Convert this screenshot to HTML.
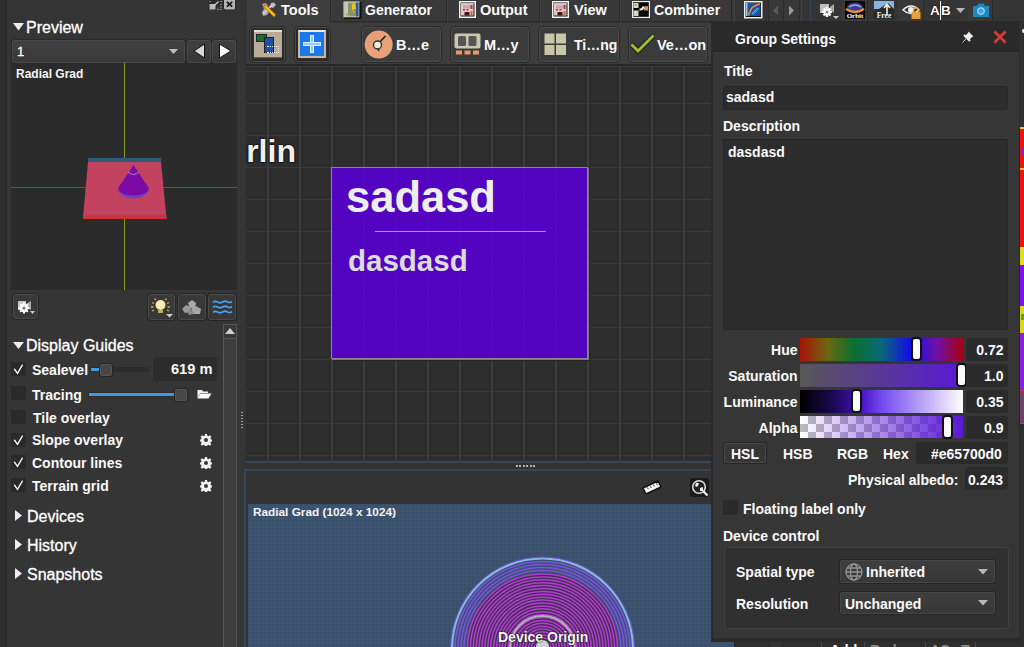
<!DOCTYPE html>
<html><head><meta charset="utf-8">
<style>
*{margin:0;padding:0;box-sizing:border-box}
html,body{width:1024px;height:647px;overflow:hidden;background:#2b2b2b;font-family:"Liberation Sans",sans-serif;color:#fafafa}
.a{position:absolute}
.b{font-weight:bold}
.t{position:absolute;white-space:nowrap;line-height:1}
.btn{border-radius:3px;background:#383838;border:1px solid #4a4a4a;box-shadow:0 0 0 1px #262626}
.cb{left:11px;width:15px;height:14px;background:#2a2a2a}
.cb span{position:absolute;left:2px;top:0px;font-size:13px;line-height:15px;color:#f0f0f0}
.thumb{width:14px;height:14px;border-radius:3px;background:#474747;border:1px solid #262626;box-shadow:inset 0 0 0 1px #555}
.tb{border-radius:4px;background:#333;border:1px solid #2a2a2a;box-shadow:inset 0 0 0 1px #4a4a4a,inset 0 0 0 3px #2a2a2a}
.tb2{border-radius:4px;background:#3b3b3b;border:1px solid #2a2a2a;box-shadow:inset 0 0 0 1px #4a4a4a}
.lbl{right:221.5px;font-size:14px;text-align:right}
.vthumb{width:11px;height:24px;background:#fafafa;border:2px solid #111;border-radius:4px}
.vbox{left:255px;width:42px;height:23px;background:#2b2b2b;border-radius:3px}
.val{right:15.5px;font-size:14px;text-align:right}
.dd{border-radius:3px;background:linear-gradient(#3e3e3e,#373737);border:1px solid #262626;box-shadow:inset 0 0 0 1px #474747}
</style></head><body>
<svg width="0" height="0" style="position:absolute"><defs>
<path id="gearp" d="M5 0H7L7.3 1.7A4.5 4.5 0 0 1 8.6 2.3L10 1.3L11.4 2.7L10.4 4.1A4.5 4.5 0 0 1 11 5.4L12 5.6V7.4L10.9 7.6A4.5 4.5 0 0 1 10.4 8.9L11.4 10.3L10 11.7L8.6 10.7A4.5 4.5 0 0 1 7.3 11.3L7 12H5L4.7 11.3A4.5 4.5 0 0 1 3.4 10.7L2 11.7L0.6 10.3L1.6 8.9A4.5 4.5 0 0 1 1.1 7.6L0 7.4V5.6L1 5.4A4.5 4.5 0 0 1 1.6 4.1L0.6 2.7L2 1.3L3.4 2.3A4.5 4.5 0 0 1 4.7 1.7Z M6 4A2 2 0 1 0 6 8A2 2 0 1 0 6 4Z" fill="#f0f0f0" fill-rule="evenodd"/>
</defs></svg>

<!-- LEFT PANEL -->
<div class="a" id="left" style="left:0;top:0;width:244px;height:647px;background:#353535">
  <div class="a" style="left:0;top:0;width:6px;height:647px;background:#2e2e2e"></div>
  <div class="a" style="left:6px;top:0;width:1px;height:647px;background:#282828"></div>
  <!-- top icons -->
  <svg class="a" style="left:207px;top:0" width="16" height="12" viewBox="0 0 16 12">
    <rect x="1.5" y="-1" width="13" height="11" fill="#2a2a2a"/>
    <rect x="2.5" y="4" width="6" height="5.5" fill="#b8b8b8"/>
    <path d="M6 7 L11.5 1.5" stroke="#c8c8c8" stroke-width="1.2"/>
    <path d="M8.5 9.5 L11.5 5 L14 9.5Z" fill="#3a3a3a"/>
    <g fill="#e0e0e0"><rect x="13.5" y="1" width="1" height="1"/><rect x="13.5" y="4" width="1" height="1"/><rect x="13.5" y="6.5" width="1" height="1"/><rect x="13.5" y="9" width="1" height="1"/><rect x="10.5" y="9" width="1" height="1"/><rect x="2.5" y="1" width="1" height="1"/></g>
  </svg>
  <svg class="a" style="left:222px;top:0" width="15" height="12" viewBox="0 0 15 12">
    <rect x="1.5" y="-3" width="12" height="13" rx="2" fill="#b4b4b4" stroke="#262626" stroke-width="1"/>
    <path d="M4.8 1.8 L10.2 6.6 M10.2 1.8 L4.8 6.6" stroke="#151515" stroke-width="1.8"/>
  </svg>
  <!-- Preview header -->
  <svg class="a" style="left:13px;top:23px" width="11" height="8" viewBox="0 0 11 8"><path d="M0 0 H11 L5.5 7.5Z" fill="#eee"/></svg>
  <div class="t" style="left:26px;top:20px;font-size:16px;color:#fff;-webkit-text-stroke:0.3px #fff">Preview</div>
  <!-- dropdown -->
  <div class="a" style="left:12px;top:40px;width:173px;height:23px;border-radius:3px;background:linear-gradient(#404040,#393939);border:1px solid #4a4a4a;box-shadow:0 0 0 1px #2a2a2a"></div>
  <div class="t" style="left:17px;top:45px;font-size:13px;color:#fff;-webkit-text-stroke:0.3px #fff">1</div>
  <svg class="a" style="left:169px;top:49px" width="9" height="5" viewBox="0 0 9 5"><path d="M0 0 H9 L4.5 5Z" fill="#bdbdbd"/></svg>
  <div class="a" style="left:187px;top:40px;width:24px;height:23px;border-radius:3px;background:linear-gradient(#3f3f3f,#383838);border:1px solid #4a4a4a;box-shadow:0 0 0 1px #2a2a2a"></div>
  <div class="a" style="left:212px;top:40px;width:24px;height:23px;border-radius:3px;background:linear-gradient(#3f3f3f,#383838);border:1px solid #4a4a4a;box-shadow:0 0 0 1px #2a2a2a"></div>
  <svg class="a" style="left:193px;top:43px" width="13" height="16" viewBox="0 0 13 16"><path d="M11.5 1 V15 L1 8Z" fill="#d8d8d8" stroke="#111" stroke-width="1"/></svg>
  <svg class="a" style="left:218px;top:43px" width="14" height="16" viewBox="0 0 14 16"><path d="M1.5 1 V15 L13 8Z" fill="#fafafa" stroke="#111" stroke-width="1"/></svg>
  <!-- viewport -->
  <div class="a" style="left:11px;top:63px;width:226px;height:227px;background:#2b2b2b;overflow:hidden">
    <div class="a" style="left:113px;top:0;width:1px;height:227px;background:#80a024"></div>
    <div class="a" style="left:0;top:124px;width:226px;height:1px;background:#a8344a"></div>
    <svg class="a" style="left:0;top:0" width="226" height="227" viewBox="11 63 226 227">
      <rect x="88" y="158" width="73" height="4" fill="#2c5a78"/>
      <path d="M88 162 H161 L166.5 218.5 H83 Z" fill="#c24260"/>
      <rect x="83" y="214.5" width="83.5" height="3" fill="#b83a50"/>
      <rect x="83" y="217.5" width="83.5" height="1.5" fill="#e02828"/>
      <ellipse cx="133.5" cy="189" rx="15" ry="9.5" fill="#6a40c8"/>
      <path d="M133.5 165 L118.5 188 Q133.5 196 148.5 188 Z" fill="#7c0aa4"/>
      <ellipse cx="133.5" cy="188.5" rx="15" ry="7" fill="#7c0aa4"/>
      <path d="M128 172 Q133.5 177 139 172" fill="none" stroke="#c0a0c0" stroke-width="0.8"/>
    </svg>
    <div class="t b" style="left:5px;top:5px;font-size:12px;color:#f6f6f6">Radial Grad</div>
  </div>
  <!-- viewport toolbar -->
  <div class="a btn" style="left:13px;top:294px;width:25px;height:25px"></div>
  <div class="a btn" style="left:148px;top:294px;width:27px;height:26px"></div>
  <div class="a btn" style="left:178px;top:294px;width:28px;height:26px"></div>
  <div class="a btn" style="left:208px;top:294px;width:28px;height:26px"></div>
  <!-- camera gear icon -->
  <svg class="a" style="left:16px;top:298px" width="20" height="18" viewBox="0 0 20 18">
    <rect x="2" y="3" width="8" height="9" fill="#c8c8c8"/>
    <path d="M10 6 L15 3 V12 L10 9Z" fill="#aaa"/>
    <circle cx="8" cy="10" r="4.2" fill="#fff"/>
    <g stroke="#fff" stroke-width="2"><path d="M8 4.5V15.5M2.5 10H13.5M4.1 6.1L11.9 13.9M11.9 6.1L4.1 13.9"/></g>
    <circle cx="8" cy="10" r="1.6" fill="#777"/>
    <path d="M14 13 H19 L16.5 16Z" fill="#ccc"/>
  </svg>
  <!-- bulb -->
  <svg class="a" style="left:151px;top:297px" width="24" height="21" viewBox="0 0 24 21">
    <circle cx="9.5" cy="8" r="5" fill="#f5eeb0"/>
    <rect x="7" y="13" width="5" height="3" fill="#c8b050"/>
    <g stroke="#d8b040" stroke-width="1.3"><path d="M1 5.5L3 6.5M0 10H2.5M1 14L3 13M18 5.5L16 6.5M19 10H16.5M18 14L16 13M3.5 1.5L5 3M15.5 1.5L14 3"/></g>
    <path d="M15 17 H22 L18.5 20.5Z" fill="#ccc"/>
  </svg>
  <!-- rocks -->
  <svg class="a" style="left:182px;top:300px" width="20" height="16" viewBox="0 0 20 16">
    <path d="M6 3 L10 0 L14 3 L13 8 L8 8Z" fill="#aaa"/>
    <path d="M0 9 L4 5 L9 7 L8 12 L3 13Z" fill="#999"/>
    <path d="M9 9 L14 6 L19 9 L18 14 L11 14Z" fill="#a5a5a5"/>
    <path d="M5 12 L9 10 L12 14 L7 15Z" fill="#8a8a8a"/>
  </svg>
  <!-- water -->
  <svg class="a" style="left:212px;top:300px" width="21" height="14" viewBox="0 0 21 14">
    <g fill="none" stroke="#3a2a20" stroke-width="2.8" opacity=".7">
      <path d="M1 3 Q3 1 5.5 2.5 T10.5 2.5 T15.5 2.5 T20 2"/>
      <path d="M1 8 Q3 6 5.5 7.5 T10.5 7.5 T15.5 7.5 T20 7"/>
      <path d="M1 13 Q3 11 5.5 12.5 T10.5 12.5 T15.5 12.5 T20 12"/>
    </g>
    <g fill="none" stroke="#42a2f4" stroke-width="1.8">
      <path d="M1 2.5 Q3 0.5 5.5 2 T10.5 2 T15.5 2 T20 1.5"/>
      <path d="M1 7.5 Q3 5.5 5.5 7 T10.5 7 T15.5 7 T20 6.5"/>
      <path d="M1 12.5 Q3 10.5 5.5 12 T10.5 12 T15.5 12 T20 11.5"/>
    </g>
  </svg>
  <!-- scrollbar -->
  <div class="a" style="left:223px;top:324px;width:14px;height:323px;background:#3e3e3e;border-left:1px solid #5a5a5a;border-right:1px solid #505050"></div>
  <div class="a" style="left:223px;top:324px;width:14px;height:15px;background:#383838;border:1px solid #585858;border-radius:2px"></div>
  <svg class="a" style="left:225px;top:328px" width="10" height="6" viewBox="0 0 10 6"><path d="M0 6 H10 L5 0Z" fill="#d0d0d0"/></svg>
  <!-- splitter dots -->
  <div class="a" style="left:241px;top:412px;width:2px;height:18px;background:repeating-linear-gradient(#a0a0a0 0 1px,transparent 1px 3px)"></div>
  <!-- Display Guides -->
  <svg class="a" style="left:13px;top:342px" width="11" height="7" viewBox="0 0 11 7"><path d="M0 0 H11 L5.5 7Z" fill="#eee"/></svg>
  <div class="t" style="left:26px;top:338px;font-size:16px;color:#fff;-webkit-text-stroke:0.3px #fff">Display Guides</div>
  <div class="a cb" style="top:362px"><svg width="15" height="15" viewBox="0 0 15 15" style="position:absolute;left:0;top:0"><path d="M3.2 6.8 L6.5 11.4 L11.6 2.6" fill="none" stroke="#000" stroke-opacity=".5" stroke-width="2.6"/><path d="M3.2 6.8 L6.5 11.4 L11.6 2.6" fill="none" stroke="#f4f4f4" stroke-width="1.5"/></svg></div>
  <div class="t b" style="left:32px;top:363px;font-size:14px">Sealevel</div>
  <div class="a" style="left:90px;top:367px;width:59px;height:5px;background:#2c2c2c;border-radius:2px"></div>
  <div class="a" style="left:91px;top:368px;width:9px;height:3px;background:#3d9ae8"></div>
  <div class="a thumb" style="left:99px;top:363px"></div>
  <div class="a" style="left:153px;top:357px;width:64px;height:24px;background:#2c2c2c;border-radius:3px"></div>
  <div class="t b" style="left:171px;top:362px;font-size:14.6px">619 m</div>
  <div class="a cb" style="top:386px"></div>
  <div class="t b" style="left:32px;top:388px;font-size:14px">Tracing</div>
  <div class="a" style="left:88px;top:392px;width:101px;height:5px;background:#2c2c2c;border-radius:2px"></div>
  <div class="a" style="left:89px;top:393px;width:87px;height:3px;background:#3d9ae8"></div>
  <div class="a thumb" style="left:174px;top:388px"></div>
  <svg class="a" style="left:197px;top:389px" width="15" height="10" viewBox="0 0 15 10"><path d="M0.5 1 H5 L6 2.5 H11 V4 H3.5 L0.5 9.5Z" fill="#f0f0f0"/><path d="M3.5 4.5 H14.5 L11.5 9.5 H0.5Z" fill="#f8f8f8"/></svg>
  <div class="a cb" style="top:410px"></div>
  <div class="t b" style="left:33px;top:411px;font-size:14px">Tile overlay</div>
  <div class="a cb" style="top:433px"><svg width="15" height="15" viewBox="0 0 15 15" style="position:absolute;left:0;top:0"><path d="M3.2 6.8 L6.5 11.4 L11.6 2.6" fill="none" stroke="#000" stroke-opacity=".5" stroke-width="2.6"/><path d="M3.2 6.8 L6.5 11.4 L11.6 2.6" fill="none" stroke="#f4f4f4" stroke-width="1.5"/></svg></div>
  <div class="t b" style="left:32px;top:433px;font-size:14px">Slope overlay</div>
  <div class="a cb" style="top:455px"><svg width="15" height="15" viewBox="0 0 15 15" style="position:absolute;left:0;top:0"><path d="M3.2 6.8 L6.5 11.4 L11.6 2.6" fill="none" stroke="#000" stroke-opacity=".5" stroke-width="2.6"/><path d="M3.2 6.8 L6.5 11.4 L11.6 2.6" fill="none" stroke="#f4f4f4" stroke-width="1.5"/></svg></div>
  <div class="t b" style="left:32px;top:456px;font-size:14px">Contour lines</div>
  <div class="a cb" style="top:478px"><svg width="15" height="15" viewBox="0 0 15 15" style="position:absolute;left:0;top:0"><path d="M3.2 6.8 L6.5 11.4 L11.6 2.6" fill="none" stroke="#000" stroke-opacity=".5" stroke-width="2.6"/><path d="M3.2 6.8 L6.5 11.4 L11.6 2.6" fill="none" stroke="#f4f4f4" stroke-width="1.5"/></svg></div>
  <div class="t b" style="left:32px;top:479px;font-size:14px">Terrain grid</div>
  <svg class="a gear" style="left:200px;top:434px" width="12" height="12" viewBox="0 0 12 12"><use href="#gearp"/></svg>
  <svg class="a gear" style="left:200px;top:457px" width="12" height="12" viewBox="0 0 12 12"><use href="#gearp"/></svg>
  <svg class="a gear" style="left:200px;top:480px" width="12" height="12" viewBox="0 0 12 12"><use href="#gearp"/></svg>
  <!-- collapsed sections -->
  <svg class="a" style="left:15px;top:510px" width="7" height="11" viewBox="0 0 7 11"><path d="M0 0 V11 L7 5.5Z" fill="#eee"/></svg>
  <div class="t" style="left:27px;top:509px;font-size:16px;color:#fff;-webkit-text-stroke:0.3px #fff">Devices</div>
  <svg class="a" style="left:15px;top:539px" width="7" height="11" viewBox="0 0 7 11"><path d="M0 0 V11 L7 5.5Z" fill="#eee"/></svg>
  <div class="t" style="left:27px;top:538px;font-size:16px;color:#fff;-webkit-text-stroke:0.3px #fff">History</div>
  <svg class="a" style="left:15px;top:568px" width="7" height="11" viewBox="0 0 7 11"><path d="M0 0 V11 L7 5.5Z" fill="#eee"/></svg>
  <div class="t" style="left:27px;top:567px;font-size:16px;color:#fff;-webkit-text-stroke:0.3px #fff">Snapshots</div>
</div>

<!-- CENTER -->
<div class="a" id="center" style="left:244px;top:0;width:468px;height:647px;background:#333333">
  <!-- tab row -->
  <div class="a" style="left:2px;top:0;width:489px;height:22px;background:#393939"></div>
  <div class="a" style="left:2px;top:21px;width:489px;height:1px;background:#2c2c2c"></div>
  <div class="a" style="left:487px;top:0;width:1px;height:21px;background:#2a2a2a"></div>
  <div class="a" style="left:490px;top:0;width:1px;height:21px;background:#414141"></div>
  <div class="a" style="left:3px;top:0;width:83px;height:23px;background:#3d3d3d"></div>
  <div class="a" style="left:86px;top:0;width:1px;height:22px;background:#2a2a2a"></div>
  <div class="a" style="left:87px;top:0;width:1px;height:22px;background:#414141"></div>
  <div class="a" style="left:202px;top:0;width:1px;height:22px;background:#2a2a2a"></div>
  <div class="a" style="left:203px;top:0;width:1px;height:22px;background:#414141"></div>
  <div class="a" style="left:295px;top:0;width:1px;height:22px;background:#2a2a2a"></div>
  <div class="a" style="left:296px;top:0;width:1px;height:22px;background:#414141"></div>
  <div class="a" style="left:375px;top:0;width:1px;height:22px;background:#2a2a2a"></div>
  <div class="a" style="left:376px;top:0;width:1px;height:22px;background:#414141"></div>
  <!-- tools icon -->
  <svg class="a" style="left:16px;top:1px" width="18" height="17" viewBox="0 0 18 17">
    <path d="M2 3 L6 2 L8 5 L6 8 L9 11 L7 14 L3 15 L2 11 L4 8 Z" fill="#a8a8b0"/>
    <path d="M11 2 L14 1.5 L16 4 L13 7 L10 6 Z" fill="#b8b8c0"/>
    <path d="M3 13 L13 3" stroke="#c8c8d0" stroke-width="2"/>
    <path d="M4 4 L15 15" stroke="#e07010" stroke-width="3.2"/>
    <path d="M5 5 L14.5 14.5" stroke="#f0e010" stroke-width="1.6"/>
  </svg>
  <div class="t b" style="left:37px;top:3px;font-size:14.5px">Tools</div>
  <!-- generator icon -->
  <svg class="a" style="left:99px;top:1px" width="19" height="18" viewBox="0 0 19 18">
    <rect x="0.5" y="0.5" width="16" height="16" fill="#e8e8e8"/>
    <rect x="16.5" y="1" width="2" height="17" fill="#111"/><rect x="1" y="16.5" width="17" height="1.5" fill="#111"/>
    <rect x="1.5" y="1.5" width="14" height="14" fill="#8a9a40"/>
    <rect x="1.5" y="1.5" width="4" height="14" fill="#c8c8b8"/>
    <path d="M5 2 L9 5 L8 9 L11 13 L7 15.5 L5 12Z" fill="#909070"/>
    <path d="M9 3 L12 2 L13 8 L11 12 L9 8Z" fill="#d8d020"/>
    <rect x="13" y="1.5" width="2.5" height="14" fill="#2a58b0"/>
    <circle cx="11.5" cy="9" r="1" fill="#d04020"/>
    <circle cx="4" cy="13.5" r="1" fill="#60b030"/>
  </svg>
  <div class="t b" style="left:121px;top:3px;font-size:14px">Generator</div>
  <!-- output icon -->
  <svg class="a" style="left:215px;top:1px" width="18" height="18" viewBox="0 0 18 18">
    <rect x="0" y="0" width="17" height="17" fill="#f4f4f4"/>
    <rect x="1.5" y="1.5" width="14" height="14" fill="#1a1010"/>
    <rect x="2" y="2" width="12.5" height="12.5" fill="#e8c8c0"/>
    <rect x="2" y="2" width="12.5" height="1.5" fill="#c0c0c8"/>
    <rect x="4" y="4.5" width="7" height="3" fill="#c8a898"/>
    <rect x="4" y="8" width="2" height="1.5" fill="#903070"/><rect x="7.5" y="8" width="2" height="1.5" fill="#903070"/><rect x="11.5" y="4" width="2" height="4" fill="#8a4060"/>
    <rect x="5.5" y="11" width="5" height="3.5" fill="#401818"/>
    <rect x="11.5" y="10" width="2" height="4" fill="#c07040"/>
  </svg>
  <div class="t b" style="left:236px;top:3px;font-size:14.5px">Output</div>
  <!-- view icon -->
  <svg class="a" style="left:308px;top:1px" width="18" height="18" viewBox="0 0 18 18">
    <rect x="0" y="0" width="17" height="17" fill="#f4f4f4"/>
    <rect x="1.5" y="1.5" width="14" height="14" fill="#1a1010"/>
    <rect x="2" y="2" width="12.5" height="12.5" fill="#e8c8c0"/>
    <rect x="2" y="2" width="12.5" height="1.5" fill="#c0c0c8"/>
    <rect x="4" y="4.5" width="7" height="3" fill="#c8a898"/>
    <rect x="4" y="8" width="2" height="1.5" fill="#903070"/><rect x="7.5" y="8" width="2" height="1.5" fill="#903070"/><rect x="11.5" y="4" width="2" height="4" fill="#8a4060"/>
    <rect x="5.5" y="11" width="5" height="3.5" fill="#401818"/>
    <rect x="11.5" y="10" width="2" height="4" fill="#c07040"/>
  </svg>
  <div class="t b" style="left:330px;top:3px;font-size:14.5px">View</div>
  <!-- combiner icon -->
  <svg class="a" style="left:388px;top:1px" width="19" height="18" viewBox="0 0 19 18">
    <rect x="0" y="0" width="18" height="17" fill="#f0f0f0"/>
    <rect x="1.2" y="1.2" width="15.6" height="14.6" fill="#050505"/>
    <rect x="1.5" y="2" width="5" height="13" fill="#d8d8c0"/>
    <path d="M1.5 8.5 H8 Q11 8.5 11 6.5 H16" fill="none" stroke="#f0f0f0" stroke-width="2"/>
    <rect x="1.5" y="7" width="6" height="2.5" fill="#050505"/>
    <rect x="12" y="6" width="4" height="3.5" fill="#c89870"/>
    <rect x="3" y="3" width="1.5" height="2" fill="#60c030"/>
  </svg>
  <div class="t b" style="left:410px;top:3px;font-size:14.2px">Combiner</div>

  <!-- toolbar row -->
  <div class="a" style="left:3px;top:23px;width:465px;height:41px;background:#3d3d3d"></div>
  <div class="a tb" style="left:5px;top:26px;width:37px;height:37px"></div>
  <div class="a tb" style="left:50px;top:26px;width:37px;height:37px"></div>
  <!-- icon1 -->
  <div class="a" style="left:10px;top:30px;width:28px;height:28px;background:#b8ac98;border-top:2px solid #e8e0d0;border-bottom:1px solid #6a5a40"></div>
  <div class="a" style="left:12px;top:34px;width:11px;height:8px;background:#1a6a38;border:1px solid #222"></div>
  <div class="a" style="left:20px;top:37px;width:10px;height:16px;background:#2050a0;border:1px solid #222"></div>
  <div class="a" style="left:23px;top:46px;width:12px;height:7px;border:1px dotted #eee;border-left:0"></div>
  <!-- icon2 -->
  <div class="a" style="left:54px;top:30px;width:28px;height:28px;background:#1a78e8;border:2px solid #c8b8a0;border-top-color:#f0e8d8"></div>
  <div class="a" style="left:66px;top:35px;width:4px;height:18px;background:#9ac8f0;border:1px solid #d8ecfc"></div>
  <div class="a" style="left:59px;top:42px;width:18px;height:4px;background:#9ac8f0;border:1px solid #d8ecfc"></div>
  <!-- labeled buttons -->
  <div class="a tb2" style="left:117px;top:26px;width:81px;height:37px"></div>
  <div class="a tb2" style="left:206px;top:26px;width:80px;height:37px"></div>
  <div class="a tb2" style="left:294px;top:26px;width:82px;height:37px"></div>
  <div class="a tb2" style="left:384px;top:26px;width:80px;height:37px"></div>
  <svg class="a" style="left:120px;top:30px" width="30" height="30" viewBox="0 0 30 30">
    <circle cx="14.7" cy="14.6" r="14" fill="#e8a078"/>
    <path d="M14 14 L21.5 6" stroke="#222" stroke-width="1.6"/>
    <path d="M13 16 L15 21" stroke="#222" stroke-width="1.4"/>
    <circle cx="13.5" cy="15" r="4" fill="#f0f0d8" stroke="#333" stroke-width="1.4"/>
  </svg>
  <div class="t b" style="left:152px;top:38px;font-size:14.5px">B…e</div>
  <svg class="a" style="left:210px;top:33px" width="27" height="23" viewBox="0 0 27 23">
    <rect x="0.5" y="0.5" width="26" height="15" rx="2" fill="#c8c8b0"/>
    <rect x="4" y="3" width="8" height="10" rx="1.5" fill="#555"/>
    <rect x="14.5" y="3" width="8" height="10" rx="1.5" fill="#555"/>
    <rect x="2" y="17.5" width="6" height="4" fill="#e89868"/>
    <rect x="10.5" y="17.5" width="6" height="4" fill="#e89868"/>
    <rect x="19" y="17.5" width="6" height="4" fill="#e89868"/>
  </svg>
  <div class="t b" style="left:240px;top:38px;font-size:14.5px">M…y</div>
  <svg class="a" style="left:300px;top:33px" width="23" height="23" viewBox="0 0 23 23">
    <rect x="0.5" y="0.5" width="10" height="10" fill="#c8c8a8"/>
    <rect x="12" y="0.5" width="10" height="10" fill="#c8c8a8"/>
    <rect x="0.5" y="12" width="10" height="10" fill="#c8c8a8"/>
    <rect x="12" y="12" width="10" height="10" fill="#c8c8a8"/>
  </svg>
  <div class="t b" style="left:330px;top:38px;font-size:14px">Ti…ng</div>
  <svg class="a" style="left:385px;top:33px" width="27" height="22" viewBox="0 0 27 22">
    <path d="M2.5 11.5 L9 18 L24.5 2.5" fill="none" stroke="#1a1a1a" stroke-width="5"/>
    <path d="M2.5 11.5 L9 18 L24.5 2.5" fill="none" stroke="#9cc034" stroke-width="3"/>
  </svg>
  <div class="t b" style="left:413px;top:38px;font-size:14.5px">Ve…on</div>

  <!-- canvas -->
  <div class="a" style="left:2px;top:64px;width:466px;height:398px;background-color:#2d2d2d;
     background-image:linear-gradient(90deg,transparent 21px,#3c3c3c 21px,#3c3c3c 23px,transparent 23px),linear-gradient(180deg,transparent 7px,#3a3a3a 7px,#3a3a3a 8px,transparent 8px);
     background-size:32px 32px;background-position:0 0;overflow:hidden">
    <div class="a" style="left:0;top:0;width:466px;height:2px;background:#262626"></div>
    <div class="a" style="left:0;top:2px;width:466px;height:1px;background:#3a3a3a"></div>
    <div class="t b" style="left:-39px;top:71px;font-size:32px;color:#f0f0f0;text-shadow:0 0 2px #000,0 0 2px #000">Perlin</div>
    <div class="a" style="left:85px;top:103px;width:257px;height:192px;background:rgba(87,0,208,0.9);border:1px solid #8a8a8a;box-shadow:1px 1px 0 #7a7a7a,2px 2px 0 #262626"></div>
    <div class="t b" style="left:100px;top:112px;font-size:43.5px;color:#eeeeee">sadasd</div>
    <div class="a" style="left:129px;top:166.5px;width:171px;height:1px;background:#a09cc0"></div>
    <div class="t b" style="left:102px;top:182px;font-size:29.5px;color:#dcdcdc">dasdasd</div>
  </div>
  <div class="a" style="left:2px;top:461px;width:466px;height:1.5px;background:#34485a"></div>
  <!-- splitter -->
  <div class="a" style="left:272px;top:465px;width:19px;height:2px;background:repeating-linear-gradient(90deg,#b0b0b0 0 2px,transparent 2px 3.4px)"></div>
  <!-- bottom panel -->
  <div class="a" style="left:0px;top:469px;width:468px;height:2px;background:#34485a"></div>
  <div class="a" style="left:0px;top:470px;width:2px;height:177px;background:#34485a"></div>
  <svg class="a" style="left:397px;top:478px" width="22" height="16" viewBox="0 0 22 16">
    <path d="M2 10 L17 3 L20 9 L5 16 Z" fill="#f5f5f5" stroke="#111" stroke-width="1.4" stroke-linejoin="round"/>
    <path d="M6.5 9.5 L7.3 11.2 M9.5 8.1 L10.3 9.8 M12.5 6.7 L13.3 8.4 M15.5 5.3 L16.3 7" stroke="#333" stroke-width="1"/>
  </svg>
  <div class="a" style="left:446px;top:478px;width:19px;height:19px;background:#1a1a1a;border-radius:3px"></div>
  <svg class="a" style="left:447px;top:479px" width="18" height="18" viewBox="0 0 18 18">
    <circle cx="8" cy="8" r="6.3" fill="#222" stroke="#ddd" stroke-width="1.6"/>
    <path d="M5 4 Q7 3 8 5 L6 8 L4 7Z M9 9 L12 8 L12 12 L9 12Z" fill="#eee"/>
    <path d="M12.5 12.5 L16.5 16.5" stroke="#eee" stroke-width="2.4"/>
  </svg>
  <!-- viewport -->
  <div class="a" style="left:4px;top:504px;width:464px;height:143px;background-color:#3d5572;overflow:hidden;
     background-image:linear-gradient(90deg,rgba(0,0,0,.035) 50%,transparent 50%),linear-gradient(rgba(0,0,0,.035) 50%,transparent 50%);background-size:4px 4px">
    <svg class="a" style="left:0;top:0" width="464" height="143" viewBox="0 0 464 143">
<circle cx="294.5" cy="145" r="76" fill="#4a2a58"/>
<circle cx="294.5" cy="145" r="75" fill="none" stroke="#b040d0" stroke-width="1.5"/>
<circle cx="294.5" cy="145" r="72.1" fill="none" stroke="#b040d0" stroke-width="1.5"/>
<circle cx="294.5" cy="145" r="69.19999999999999" fill="none" stroke="#b040d0" stroke-width="1.5"/>
<circle cx="294.5" cy="145" r="66.29999999999998" fill="none" stroke="#b040d0" stroke-width="1.5"/>
<circle cx="294.5" cy="145" r="63.399999999999984" fill="none" stroke="#b040d0" stroke-width="1.5"/>
<circle cx="294.5" cy="145" r="60.499999999999986" fill="none" stroke="#b040d0" stroke-width="1.5"/>
<circle cx="294.5" cy="145" r="57.59999999999999" fill="none" stroke="#b040d0" stroke-width="1.5"/>
<circle cx="294.5" cy="145" r="54.69999999999999" fill="none" stroke="#b040d0" stroke-width="1.5"/>
<circle cx="294.5" cy="145" r="51.79999999999999" fill="none" stroke="#b040d0" stroke-width="1.5"/>
<circle cx="294.5" cy="145" r="48.89999999999999" fill="none" stroke="#b040d0" stroke-width="1.5"/>
<circle cx="294.5" cy="145" r="45.99999999999999" fill="none" stroke="#b040d0" stroke-width="1.5"/>
<circle cx="294.5" cy="145" r="43.099999999999994" fill="none" stroke="#b040d0" stroke-width="1.5"/>
<circle cx="294.5" cy="145" r="40.199999999999996" fill="none" stroke="#b040d0" stroke-width="1.5"/>
<circle cx="294.5" cy="145" r="37.3" fill="none" stroke="#b040d0" stroke-width="1.5"/>
<circle cx="294.5" cy="145" r="34.4" fill="none" stroke="#b040d0" stroke-width="1.5"/>
<circle cx="294.5" cy="145" r="31.5" fill="none" stroke="#b040d0" stroke-width="1.5"/>
<circle cx="294.5" cy="145" r="28.6" fill="none" stroke="#b040d0" stroke-width="1.5"/>
<circle cx="294.5" cy="145" r="25.700000000000003" fill="none" stroke="#b040d0" stroke-width="1.5"/>
<circle cx="294.5" cy="145" r="22.800000000000004" fill="none" stroke="#b040d0" stroke-width="1.5"/>
<circle cx="294.5" cy="145" r="19.900000000000006" fill="none" stroke="#b040d0" stroke-width="1.5"/>
<circle cx="294.5" cy="145" r="17.000000000000007" fill="none" stroke="#b040d0" stroke-width="1.5"/>
<circle cx="294.5" cy="145" r="14.100000000000007" fill="none" stroke="#b040d0" stroke-width="1.5"/>
<circle cx="294.5" cy="145" r="11.200000000000006" fill="none" stroke="#b040d0" stroke-width="1.5"/>
<circle cx="294.5" cy="145" r="8.300000000000006" fill="none" stroke="#b040d0" stroke-width="1.5"/>
<circle cx="294.5" cy="145" r="5.400000000000006" fill="none" stroke="#b040d0" stroke-width="1.5"/>
<circle cx="294.5" cy="145" r="78.5" fill="none" stroke="#7a52e0" stroke-width="1.6"/>
<circle cx="294.5" cy="145" r="81.5" fill="none" stroke="#7a52e0" stroke-width="1.6"/>
<circle cx="294.5" cy="145" r="84.5" fill="none" stroke="#7a52e0" stroke-width="1.6"/>
<circle cx="294.5" cy="145" r="87.5" fill="none" stroke="#7a52e0" stroke-width="1.6"/>
<circle cx="294.5" cy="145" r="90.5" fill="none" stroke="#88b8e0" stroke-width="2.2"/>
<circle cx="294.5" cy="145" r="92" fill="none" stroke="#7a52e0" stroke-width="0.8"/>
</svg>
    <div class="a" style="left:261px;top:111px;width:67px;height:67px;border-radius:50%;border:2px solid #b8b0b8"></div>
    <div class="a" style="left:287px;top:135px;width:15px;height:15px;border-radius:50%;background:#d0d0d0;border:1.5px solid #222"></div>
    <div class="t b" style="left:5px;top:3px;font-size:11.8px;color:#f4f4f4">Radial Grad (1024 x 1024)</div>
    <div class="t b" style="left:250px;top:126px;font-size:14px;color:#fafafa;text-shadow:0 0 1.5px #000,0 0 1px #000">Device Origin</div>
  </div>
</div>

<!-- TOP RIGHT BAR -->
<div class="a" id="topright" style="left:735px;top:0;width:289px;height:22px;background:#353535;overflow:hidden">
  <div class="a" style="left:0;top:21px;width:312px;height:1px;background:#2a2a2a"></div>
  <div class="a" style="left:-3px;top:0;width:1px;height:21px;background:#2a2a2a"></div>
  <div class="a" style="left:-2px;top:0;width:1px;height:21px;background:#414141"></div>
  <!-- image icon -->
  <svg class="a" style="left:9px;top:1px" width="19" height="18" viewBox="0 0 19 18">
    <rect x="0" y="0" width="18.5" height="17.5" fill="#f0f0f0"/>
    <rect x="1.5" y="1.5" width="15.5" height="14.5" fill="#101010"/>
    <rect x="2" y="2" width="14.5" height="13" fill="#2050a0"/>
    <rect x="2" y="2" width="1.5" height="13" fill="#a0c8e0"/>
    <path d="M4.5 14.5 Q7 7 9 6 Q12 4 16 3" fill="none" stroke="#e89030" stroke-width="1.6"/>
    <path d="M8 13 L14 7" stroke="#40b8f0" stroke-width="1.3"/>
    <path d="M9 14 L15 8" stroke="#40a040" stroke-width="1"/>
  </svg>
  <!-- prev/next -->
  <div class="a" style="left:33px;top:0;width:1px;height:21px;background:#2c2c2c"></div>
  <div class="a" style="left:34px;top:0;width:14px;height:21px;background:#383838"></div>
  <div class="a" style="left:48px;top:0;width:1px;height:21px;background:#2c2c2c"></div>
  <div class="a" style="left:49px;top:0;width:15px;height:21px;background:#383838"></div>
  <div class="a" style="left:64px;top:0;width:1px;height:21px;background:#2c2c2c"></div>
  <svg class="a" style="left:37px;top:5px" width="8" height="11" viewBox="0 0 8 11"><path d="M6 0.5 V10.5 L1 5.5Z" fill="#5a5a5a"/></svg>
  <svg class="a" style="left:52px;top:5px" width="8" height="11" viewBox="0 0 8 11"><path d="M2 0.5 V10.5 L7 5.5Z" fill="#9a9a9a"/></svg>
  <div class="a" style="left:66px;top:0;width:1px;height:21px;background:#34485a"></div>
  <div class="a" style="left:75px;top:0;width:1px;height:21px;background:#34485a"></div>
  <!-- camera gear -->
  <svg class="a" style="left:84px;top:2px" width="21" height="18" viewBox="0 0 21 18">
    <rect x="1" y="2" width="9" height="9" fill="#c0c0c0"/>
    <path d="M11 5 L15 2 V11 L11 8Z" fill="#a8a8a8"/>
    <g stroke="#fff" stroke-width="2.2"><path d="M8 5V15M3 10H13M4.5 6.5L11.5 13.5M11.5 6.5L4.5 13.5"/></g>
    <circle cx="8" cy="10" r="3.6" fill="#fff"/>
    <circle cx="8" cy="10" r="1.5" fill="#888"/>
    <path d="M14 14 H20 L17 17Z" fill="#ccc"/>
  </svg>
  <!-- orbit -->
  <div class="a" style="left:107px;top:0;width:26px;height:21px;background:#3a3a3a;border-left:-22px solid #2a2a2a;border-right:1px solid #2a2a2a"></div>
  <div class="a" style="left:110px;top:1px;width:20px;height:18px;background:#0a0a0a"></div>
  <svg class="a" style="left:110px;top:1px" width="20" height="18" viewBox="0 0 20 18">
    <ellipse cx="10" cy="7" rx="8" ry="5.5" fill="#3a3a9a"/>
    <path d="M4 6 Q10 2 16 6" stroke="#a8b0c8" stroke-width="1.5" fill="none"/>
    <path d="M1 8 Q10 14 19 8" stroke="#e89030" stroke-width="2.5" fill="none"/>
    <text x="10" y="17" font-family="Liberation Serif" font-size="7" font-weight="bold" fill="#fff" text-anchor="middle">Orbit</text>
  </svg>
  <!-- free -->
  <div class="a" style="left:139px;top:1px;width:20px;height:18px;background:linear-gradient(#8ab4e0 0 45%,#303030 45%)"></div>
  <svg class="a" style="left:139px;top:1px" width="20" height="18" viewBox="0 0 20 18">
    <path d="M0 11 L8 6 L14 2 L20 8 V18 H0Z" fill="#2a2a2a"/>
    <path d="M13 14 V4 M10 7 L13 3 L16 7" stroke="#f0f0e0" stroke-width="1.6" fill="none"/>
    <text x="10" y="17" font-family="Liberation Serif" font-size="7.5" font-weight="bold" fill="#f4f4f4" text-anchor="middle">Free</text>
  </svg>
  <!-- eye lock -->
  <div class="a" style="left:163px;top:0;width:26px;height:21px;background:#383838;border-left:-22px solid #2a2a2a;border-right:1px solid #2a2a2a"></div>
  <svg class="a" style="left:167px;top:2px" width="20" height="18" viewBox="0 0 20 18">
    <path d="M1 8 Q9 0 17 8 Q9 15 1 8Z" fill="none" stroke="#f0f0f0" stroke-width="1.5"/>
    <circle cx="9" cy="8" r="3" fill="#f0f0f0"/>
    <rect x="9.5" y="10" width="9" height="7" fill="#e8a040"/>
    <path d="M11.5 10.5 V8.5 A2.5 2.5 0 0 1 16.5 8.5 V10.5" fill="none" stroke="#e8a040" stroke-width="1.5"/>
  </svg>
  <!-- AB -->
  <div class="t b" style="left:195px;top:4px;font-size:13.5px;color:#fff;text-shadow:0 0 1.5px #000,0 0 1px #000">A</div>
  <div class="t b" style="left:206px;top:4px;font-size:13.5px;color:#fff;text-shadow:0 0 1.5px #000,0 0 1px #000">B</div>
  <div class="a" style="left:204.5px;top:1px;width:1px;height:19px;background:#fff;box-shadow:0 0 1px #000"></div>
  <svg class="a" style="left:221px;top:8px" width="9" height="5" viewBox="0 0 9 5"><path d="M0 0 H9 L4.5 5Z" fill="#b8b8b8"/></svg>
  <!-- camera -->
  <div class="a" style="left:232px;top:0;width:26px;height:21px;background:#383838;border-left:-22px solid #2a2a2a;border-right:1px solid #2a2a2a"></div>
  <svg class="a" style="left:237px;top:2px" width="18" height="16" viewBox="0 0 18 16">
    <path d="M1 4 H5 L6.5 1.5 H11.5 L13 4 H17 V15 H1Z" fill="#1a8ac0"/>
    <circle cx="9" cy="9" r="3.8" fill="#a8d8f8"/>
    <circle cx="9" cy="9" r="2.6" fill="#3aa0e8"/>
  </svg>
</div>

<!-- GROUP SETTINGS DIALOG -->
<div class="a" id="dlg" style="left:711px;top:22px;width:308px;height:620px;background:#2a2a2a">
  <div class="a" style="left:2px;top:29px;width:306px;height:1px;background:#262626"></div>
  <div class="a" style="left:2px;top:30px;width:306px;height:586px;background:#363636"></div>
  <div class="t b" style="left:24px;top:10px;font-size:14px">Group Settings</div>
  <svg class="a" style="left:251px;top:9px" width="12" height="12" viewBox="0 0 12 12">
    <path d="M6.5 0.5 L11.5 5.5 L10 6 L8 8 L8.5 10 L7 10.5 L1.5 5 L2 3.5 L4 4 L6 2 Z" fill="#f0f0f0"/>
    <path d="M4 8 L0.5 11.5" stroke="#ccc" stroke-width="1"/>
  </svg>
  <svg class="a" style="left:282px;top:8px" width="14" height="14" viewBox="0 0 14 14"><path d="M1.5 1.5 L12.5 12.5 M12.5 1.5 L1.5 12.5" stroke="#e03a3a" stroke-width="2.6"/></svg>

  <div class="t b" style="left:13px;top:42px;font-size:14px">Title</div>
  <div class="a" style="left:12px;top:64px;width:285px;height:24px;background:#2c2c2c;border:1px solid #282828;border-top-color:#242424;border-radius:3px"></div>
  <div class="t b" style="left:15px;top:67.5px;font-size:14px">sadasd</div>
  <div class="t b" style="left:12px;top:97px;font-size:14px">Description</div>
  <div class="a" style="left:12px;top:117px;width:285px;height:191px;background:#2c2c2c;border:1px solid #282828;border-top-color:#242424;border-radius:1px"></div>
  <div class="t b" style="left:17px;top:123px;font-size:14px">dasdasd</div>

  <!-- sliders -->
  <div class="t b lbl" style="top:321px">Hue</div>
  <div class="a" style="left:89px;top:316px;width:163px;height:23px;background:linear-gradient(90deg,#a81008 0%,#6c6810 17%,#0a7030 33%,#0a6878 50%,#1010e0 67%,#7010a8 84%,#a80010 100%)"></div>
  <div class="a vthumb" style="left:200px;top:315px"></div>
  <div class="a vbox" style="top:316px"></div>
  <div class="t b val" style="top:321px">0.72</div>

  <div class="t b lbl" style="top:347px">Saturation</div>
  <div class="a" style="left:89px;top:342px;width:163px;height:23px;background:linear-gradient(90deg,#575757,#5a18d8)"></div>
  <div class="a vthumb" style="left:245px;top:341px"></div>
  <div class="a vbox" style="top:342px"></div>
  <div class="t b val" style="top:347px">1.0</div>

  <div class="t b lbl" style="top:373px">Luminance</div>
  <div class="a" style="left:89px;top:368px;width:163px;height:23px;background:linear-gradient(90deg,#000 0%,#1a0850 20%,#4a12c8 38%,#7448f0 50%,#b098f6 72%,#ffffff 100%)"></div>
  <div class="a vthumb" style="left:140px;top:367px"></div>
  <div class="a vbox" style="top:368px"></div>
  <div class="t b val" style="top:373px">0.35</div>

  <div class="t b lbl" style="top:399px">Alpha</div>
  <div class="a" style="left:89px;top:394px;width:163px;height:22px;background-color:#fff;background-image:linear-gradient(45deg,#bbb 25%,transparent 25%,transparent 75%,#bbb 75%),linear-gradient(45deg,#bbb 25%,transparent 25%,transparent 75%,#bbb 75%);background-size:16px 16px;background-position:0 0,8px 8px"></div>
  <div class="a" style="left:89px;top:394px;width:163px;height:22px;background:linear-gradient(90deg,rgba(90,24,216,0),rgba(90,24,216,1))"></div>
  <div class="a vthumb" style="left:231px;top:393px"></div>
  <div class="a vbox" style="top:394px"></div>
  <div class="t b val" style="top:399px">0.9</div>

  <div class="a" style="left:12px;top:420px;width:44px;height:22px;background:#363636;border:1px solid #262626;box-shadow:inset 0 0 0 1px #484848;border-radius:3px"></div>
  <div class="t b" style="left:20px;top:425px;font-size:14px">HSL</div>
  <div class="t b" style="left:72px;top:425px;font-size:14px">HSB</div>
  <div class="t b" style="left:126px;top:425px;font-size:14px">RGB</div>
  <div class="t b" style="left:172px;top:425px;font-size:14px">Hex</div>
  <div class="a" style="left:205px;top:420px;width:92px;height:22px;background:#2b2b2b;border-radius:3px"></div>
  <div class="t b" style="left:220px;top:425px;font-size:14px">#e65700d0</div>
  <div class="t b" style="left:137px;top:451px;font-size:14px">Physical albedo:</div>
  <div class="a" style="left:254px;top:445px;width:43px;height:23px;background:#2b2b2b;border-radius:3px"></div>
  <div class="t b" style="left:257px;top:451px;font-size:14px">0.243</div>

  <div class="a" style="left:12px;top:478px;width:15px;height:15px;background:#2a2a2a"></div>
  <div class="t b" style="left:32px;top:480px;font-size:14px">Floating label only</div>
  <div class="t b" style="left:12px;top:507px;font-size:14px">Device control</div>
  <div class="a" style="left:13px;top:525px;width:285px;height:82px;background:#303030;border:1px solid #404040;border-radius:3px"></div>
  <div class="t b" style="left:25px;top:543px;font-size:14px">Spatial type</div>
  <div class="a dd" style="left:128px;top:537px;width:157px;height:25px"></div>
  <svg class="a" style="left:134px;top:541px" width="18" height="18" viewBox="0 0 18 18">
    <g fill="none" stroke="#959595" stroke-width="1.3"><circle cx="9" cy="9" r="8"/><ellipse cx="9" cy="9" rx="3.5" ry="8"/><path d="M1 9H17M2.5 5H15.5M2.5 13H15.5"/></g>
  </svg>
  <div class="t b" style="left:155px;top:543px;font-size:14px">Inherited</div>
  <svg class="a" style="left:267px;top:547px" width="10" height="6" viewBox="0 0 10 6"><path d="M0 0 H10 L5 5.5Z" fill="#b8b8b8"/></svg>
  <div class="t b" style="left:25px;top:575px;font-size:14px">Resolution</div>
  <div class="a dd" style="left:128px;top:569px;width:157px;height:24px"></div>
  <div class="t b" style="left:134px;top:575px;font-size:14px">Unchanged</div>
  <svg class="a" style="left:267px;top:578px" width="10" height="6" viewBox="0 0 10 6"><path d="M0 0 H10 L5 5.5Z" fill="#b8b8b8"/></svg>
</div>

<!-- BOTTOM STRIP under dialog -->
<div class="a" style="left:711px;top:642px;width:313px;height:5px;background:#2e2e2e;overflow:hidden">
  <div class="a" style="left:0;top:0;width:23px;height:5px;background:#3b536e"></div>
  <div class="a" style="left:23px;top:0;width:1px;height:5px;background:#262626"></div>
  <div class="a" style="left:60px;top:0;width:10px;height:5px;background:#333"></div>
  <div class="a" style="left:110px;top:0;width:1px;height:5px;background:#4a4a4a"></div>
  <div class="a" style="left:153px;top:0;width:1px;height:5px;background:#4a4a4a"></div>
  <div class="a" style="left:214px;top:0;width:1px;height:5px;background:#4a4a4a"></div>
  <div class="a" style="left:264px;top:0;width:1px;height:5px;background:#4a4a4a"></div>
  <div class="t b" style="left:119px;top:1px;font-size:14px;color:#fff">Add</div>
  <div class="t b" style="left:159px;top:1px;font-size:14px;color:#8a8a8a">Redraw</div>
  <div class="t b" style="left:219px;top:1px;font-size:14px;color:#8a8a8a">AC</div>
  <div class="t b" style="left:250px;top:1px;font-size:14px;color:#8a8a8a">Te</div>
</div>

<!-- FAR RIGHT STRIP -->
<div class="a" id="strip" style="left:1019px;top:22px;width:5px;height:620px;background:#2e2e2e;overflow:hidden">
  <div class="a" style="left:2px;top:0;width:1px;height:104px;background:#353535"></div>
  <div class="a" style="left:3px;top:7px;width:3px;height:4px;background:#eee;border-radius:50%"></div>
  <div class="a" style="left:0;top:104px;width:1px;height:300px;background:#1a2a3a"></div>
  <div class="a" style="left:1px;top:105px;width:4px;height:120px;background:#ec1212"></div>
  <div class="a" style="left:1px;top:105px;width:4px;height:2px;background:#d8d030"></div>
  <div class="a" style="left:3px;top:126px;width:2px;height:7px;background:#8020e0"></div>
  <div class="a" style="left:1px;top:146px;width:4px;height:2px;background:#d8d030"></div>
  <div class="a" style="left:1px;top:225px;width:4px;height:18px;background:#dcdc20"></div>
  <div class="a" style="left:1px;top:243px;width:4px;height:42px;background:#8010f0"></div>
  <div class="a" style="left:1px;top:284px;width:4px;height:27px;background:#d8d820"></div>
  <div class="a" style="left:2px;top:292px;width:3px;height:6px;background:#60a030"></div>
  <div class="a" style="left:1px;top:311px;width:4px;height:57px;background:#8a20e0"></div>
  <div class="a" style="left:1px;top:368px;width:4px;height:1px;background:#e03040"></div>
  <div class="a" style="left:1px;top:369px;width:4px;height:33px;background:#704268"></div>
  <div class="a" style="left:1px;top:401px;width:4px;height:1px;background:#e03040"></div>
</div>

</body></html>
